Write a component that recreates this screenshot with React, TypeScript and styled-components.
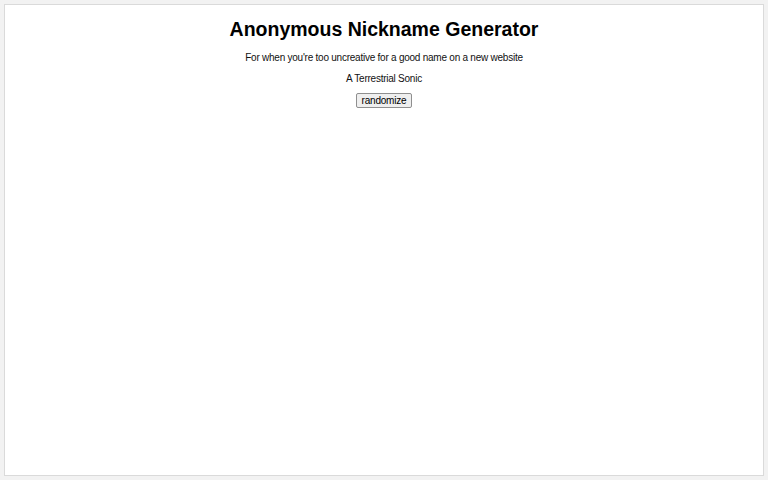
import React from "react";
import styled, { createGlobalStyle } from "styled-components";

const Global = createGlobalStyle`
  html, body { margin: 0; padding: 0; background: #f2f2f2; }
  body { font-family: "Liberation Sans", Arial, sans-serif; }
`;

const Panel = styled.main`
  box-sizing: border-box;
  margin: 4px;
  height: 472px;
  background: #ffffff;
  border: 1px solid #dadada;
  display: flex;
  flex-direction: column;
  align-items: center;
  padding-top: 13px;
  color: #000;
`;

const Title = styled.h1`
  margin: 0;
  font-size: 19.5px;
  font-weight: bold;
  line-height: 22px;
`;

const Text = styled.p<{ $top: number }>`
  margin: ${(p) => p.$top}px 0 0;
  font-size: 10px;
  line-height: 12px;
  letter-spacing: -0.24px;
  color: #111;
`;

const Button = styled.button`
  margin-top: 8px;
  font-family: "Liberation Sans", Arial, sans-serif;
  font-size: 10px;
  letter-spacing: -0.2px;
  line-height: 12px;
  padding: 0 5px;
  height: 15px;
  background: #efefef;
  border: 1px solid #8f8f8f;
  border-radius: 2px;
  color: #000;
`;

export default function App() {
  return (
    <>
      <Global />
      <Panel>
        <Title>Anonymous Nickname Generator</Title>
        <Text $top={12}>For when you're too uncreative for a good name on a new website</Text>
        <Text $top={9}>A Terrestrial Sonic</Text>
        <Button>randomize</Button>
      </Panel>
    </>
  );
}
